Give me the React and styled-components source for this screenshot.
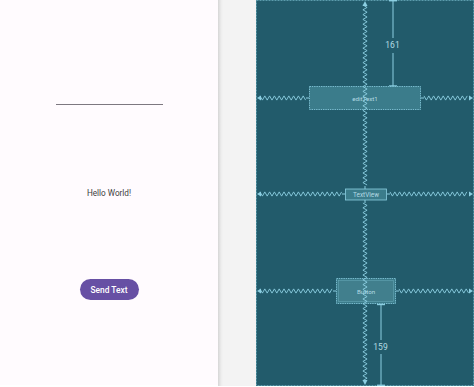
import React from 'react';
import styled, { createGlobalStyle } from 'styled-components';

const GlobalStyle = createGlobalStyle`
  html, body {
    margin: 0;
    padding: 0;
    background: #ffffff;
    font-family: Roboto, "Noto Sans", sans-serif;
  }
`;

const Page = styled.div`
  display: flex;
  width: 474px;
  height: 387px;
  overflow: hidden;
`;

const Phone = styled.div`
  width: 218px;
  height: 385px;
  background: #fffbfe;
  display: flex;
  flex-direction: column;
  align-items: center;
  flex-shrink: 0;
`;

const Gutter = styled.div`
  width: 38px;
  height: 386px;
  flex-shrink: 0;
  background: linear-gradient(to right, #d6d6d6 0, #ececec 3px, #f3f3f3 5px, #f3f3f3 100%);
`;

const Blueprint = styled.div`
  width: 218px;
  height: 386px;
  flex-shrink: 0;
  background: #225b6b;
`;

const EditText = styled.div`
  width: 107px;
  height: 18px;
  margin-top: 86px;
  border-bottom: 1px solid #7d7880;
`;

const HelloText = styled.div`
  margin-top: 83px;
  font-size: 8.2px;
  line-height: 11px;
  color: #3d3b40;
  -webkit-font-smoothing: antialiased;
`;

const SendButton = styled.button`
  margin-top: 80px;
  width: 59px;
  height: 21px;
  border: none;
  border-radius: 11px;
  background: #6750a4;
  color: #ffffff;
  font-family: Roboto, "Noto Sans", sans-serif;
  font-weight: 500;
  font-size: 8.4px;
  padding: 0;
`;

const LINE = '#8ccfe2';
const BOX = '#3b7c8b';
const LABEL = '#b3dbe4';

function zigH(x1, x2, y, amp = 2.1, step = 2.4) {
  const pts = [];
  let i = 0;
  for (let x = x1; x <= x2; x += step, i++) {
    pts.push(`${x.toFixed(1)},${(y + (i % 2 ? amp : -amp)).toFixed(1)}`);
  }
  return pts.join(' ');
}

function zigV(y1, y2, x, amp = 2.1, step = 2.4) {
  const pts = [];
  let i = 0;
  for (let y = y1; y <= y2; y += step, i++) {
    pts.push(`${(x + (i % 2 ? amp : -amp)).toFixed(1)},${y.toFixed(1)}`);
  }
  return pts.join(' ');
}

const Diagram = () => (
  <svg width="218" height="386" viewBox="0 0 218 386">
    <rect x="0.5" y="0.5" width="217" height="385" fill="none" stroke={LINE} strokeOpacity="0.55" strokeDasharray="2 1" />

    {/* edit text constraints */}
    <polyline points={zigH(4, 50, 98)} fill="none" stroke={LINE} strokeWidth="0.9" />
    <line x1="50" y1="98" x2="53" y2="98" stroke={LINE} />
    <polygon points="1,98 5,95.5 5,100.5" fill={LINE} />
    <polyline points={zigH(168, 213, 98)} fill="none" stroke={LINE} strokeWidth="0.9" />
    <line x1="165" y1="98" x2="168" y2="98" stroke={LINE} />
    <polygon points="217,98 213,95.5 213,100.5" fill={LINE} />

    {/* text view constraints */}
    <polyline points={zigH(4, 86, 194)} fill="none" stroke={LINE} strokeWidth="0.9" />
    <line x1="86" y1="194" x2="89" y2="194" stroke={LINE} />
    <polygon points="1,194 5,191.5 5,196.5" fill={LINE} />
    <polyline points={zigH(134, 213, 194)} fill="none" stroke={LINE} strokeWidth="0.9" />
    <line x1="131" y1="194" x2="134" y2="194" stroke={LINE} />
    <polygon points="217,194 213,191.5 213,196.5" fill={LINE} />

    {/* button constraints */}
    <polyline points={zigH(4, 77, 291)} fill="none" stroke={LINE} strokeWidth="0.9" />
    <line x1="77" y1="291" x2="80" y2="291" stroke={LINE} />
    <polygon points="1,291 5,288.5 5,293.5" fill={LINE} />
    <polyline points={zigH(143, 213, 291)} fill="none" stroke={LINE} strokeWidth="0.9" />
    <line x1="140" y1="291" x2="143" y2="291" stroke={LINE} />
    <polygon points="217,291 213,288.5 213,293.5" fill={LINE} />

    {/* margin 161 */}
    <line x1="137" y1="0" x2="137" y2="38" stroke={LINE} />
    <line x1="137" y1="53" x2="137" y2="86" stroke={LINE} />
    <line x1="133" y1="86" x2="141" y2="86" stroke={LINE} strokeWidth="1.4" />
    <line x1="133" y1="0.7" x2="141" y2="0.7" stroke={LINE} strokeWidth="1.4" />
    <text x="136.5" y="48" fontSize="8.5" fill={LABEL} textAnchor="middle" fontFamily="Roboto, sans-serif">161</text>

    {/* margin 159 */}
    <line x1="125" y1="304" x2="125" y2="340" stroke={LINE} />
    <line x1="125" y1="354" x2="125" y2="386" stroke={LINE} />
    <line x1="121" y1="304.5" x2="129" y2="304.5" stroke={LINE} strokeWidth="1.4" />
    <line x1="121" y1="385.3" x2="129" y2="385.3" stroke={LINE} strokeWidth="1.4" />
    <text x="124.5" y="350" fontSize="8.5" fill={LABEL} textAnchor="middle" fontFamily="Roboto, sans-serif">159</text>

    {/* boxes (drawn under the vertical chain) */}
    <rect x="53.5" y="86.5" width="111" height="23" fill={BOX} stroke={LINE} strokeWidth="0.8" strokeDasharray="1.5 0.8" />
    <text x="109" y="101" fontSize="6.2" fill={LABEL} textAnchor="middle" fontFamily="Roboto, sans-serif">editText1</text>

    <rect x="80.5" y="278.5" width="59" height="25" fill={BOX} stroke={LINE} strokeWidth="0.8" strokeDasharray="1.5 0.8" />
    <rect x="82.5" y="280.5" width="55" height="21" fill="#417f8d" stroke={LINE} strokeOpacity="0.5" strokeWidth="0.6" />
    <text x="110" y="293.5" fontSize="6.2" fill={LABEL} textAnchor="middle" fontFamily="Roboto, sans-serif">Button</text>

    {/* vertical chain */}
    <polyline points={zigV(5, 186, 109)} fill="none" stroke={LINE} strokeWidth="0.9" />
    <polyline points={zigV(203, 381, 109)} fill="none" stroke={LINE} strokeWidth="0.9" />
    <line x1="109" y1="186" x2="109" y2="189" stroke={LINE} />
    <line x1="109" y1="200" x2="109" y2="203" stroke={LINE} />
    <polygon points="109,1 106.5,6 111.5,6" fill={LINE} />
    <polygon points="109,385 106.5,380 111.5,380" fill={LINE} />

    {/* text view box over the chain */}
    <rect x="89.5" y="189" width="41" height="11" fill={BOX} stroke={LINE} strokeWidth="0.8" />
    <text x="110" y="197" fontSize="6.4" fill={LABEL} textAnchor="middle" fontFamily="Roboto, sans-serif">TextView</text>
  </svg>
);

export default function App() {
  return (
    <>
      <GlobalStyle />
      <Page>
        <Phone>
          <EditText />
          <HelloText>Hello World!</HelloText>
          <SendButton>Send Text</SendButton>
        </Phone>
        <Gutter />
        <Blueprint>
          <Diagram />
        </Blueprint>
      </Page>
    </>
  );
}
